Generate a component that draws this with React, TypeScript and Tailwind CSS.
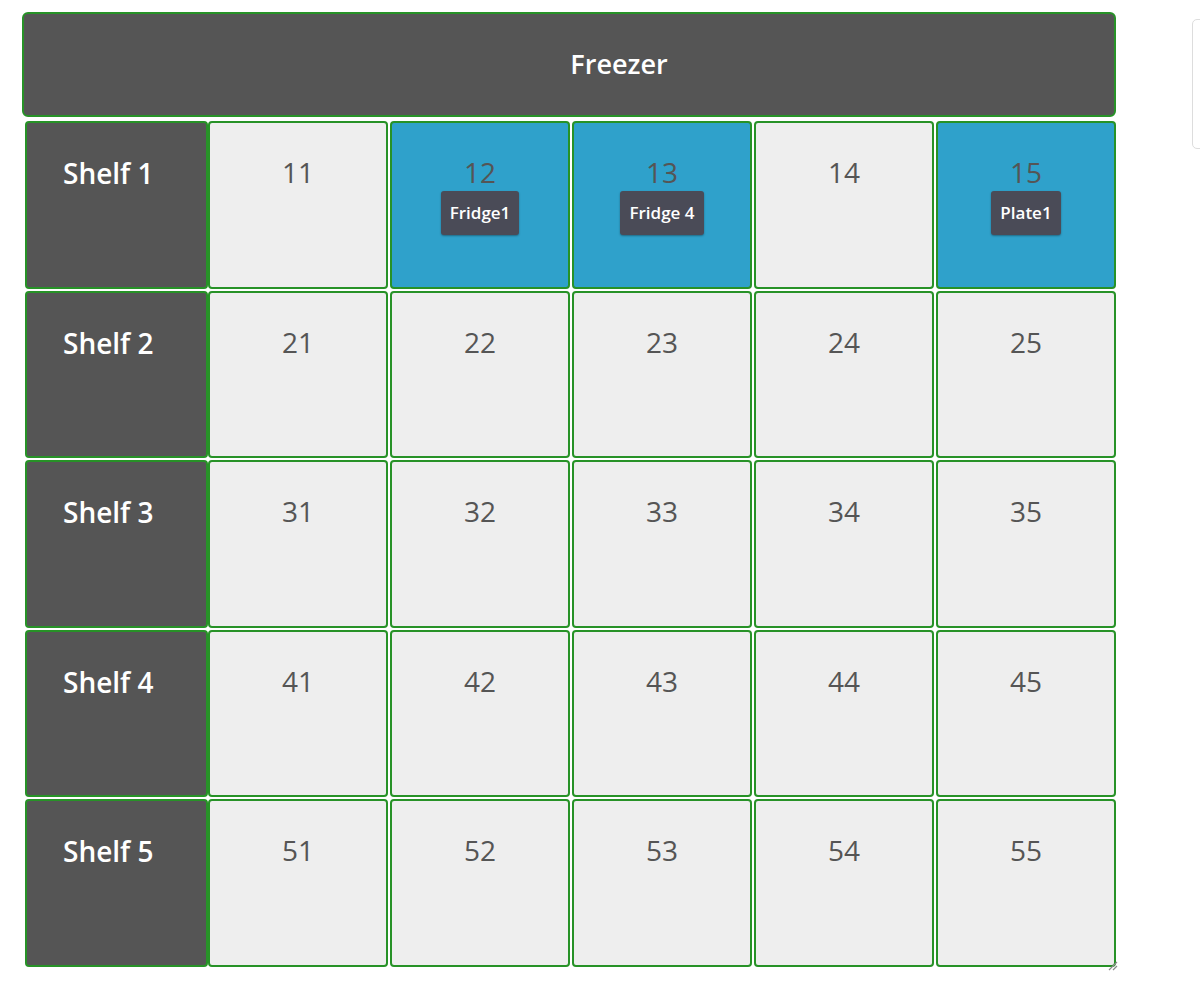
const columns = [1, 2, 3, 4, 5];
const shelves = [1, 2, 3, 4, 5];

const items: Record<string, string> = {
  "12": "Fridge1",
  "13": "Fridge 4",
  "15": "Plate1",
};

function Slot({ id }: { id: string }) {
  const label = items[id];
  return (
    <div
      className={`flex h-full w-[180px] flex-col items-center rounded-[4px] border-2 border-[#279227] pt-[30px] ${
        label ? "bg-[#2fa1cb]" : "bg-[#eeeeee]"
      }`}
    >
      <p className="text-[28px] leading-[38px] text-[#555555]">{id}</p>
      {label && (
        <span className="flex h-[44px] items-center rounded-[3px] bg-[#4a4b57] px-[9px] text-[17px] font-semibold text-white shadow-[0_1px_2px_rgba(0,0,0,0.35)]">
          {label}
        </span>
      )}
    </div>
  );
}

export default function App() {
  return (
    <div
      className="flex w-[1200px] overflow-hidden bg-white"
      style={{ fontFamily: '"Open Sans", "Noto Sans", sans-serif', height: 985 }}
    >
      <div className="relative ml-[22px] mt-[12px] w-[1095px]">
        <div className="flex h-[105px] items-center justify-center rounded-[6px] border-2 border-[#279227] bg-[#555555] pl-[100px]">
          <p className="text-[27px] font-semibold text-white">Freezer</p>
        </div>

        <div className="mt-[4px] flex flex-col gap-[2px] pl-[3px]">
          {shelves.map((shelf) => (
            <div key={shelf} className="flex h-[167.5px]">
              <div className="h-full w-[183px] rounded-[4px] border-2 border-[#279227] bg-[#555555] pl-[36px] pt-[31px]">
                <p className="text-[28px] font-semibold leading-[38px] text-white">
                  Shelf {shelf}
                </p>
              </div>
              <div className="flex gap-[2px]">
                {columns.map((col) => (
                  <Slot key={col} id={`${shelf}${col}`} />
                ))}
              </div>
            </div>
          ))}
        </div>

        <svg
          className="absolute bottom-[14px] right-[-2px]"
          width="12"
          height="12"
          viewBox="0 0 12 12"
        >
          <path d="M11 3 L3 11 M11 7 L7 11" stroke="#8a8a8a" strokeWidth="1.2" />
        </svg>
      </div>

      <div className="ml-[76px] mt-[19px] h-[130px] w-[60px] shrink-0 rounded-[5px] border border-[#dddddd]" />
    </div>
  );
}
